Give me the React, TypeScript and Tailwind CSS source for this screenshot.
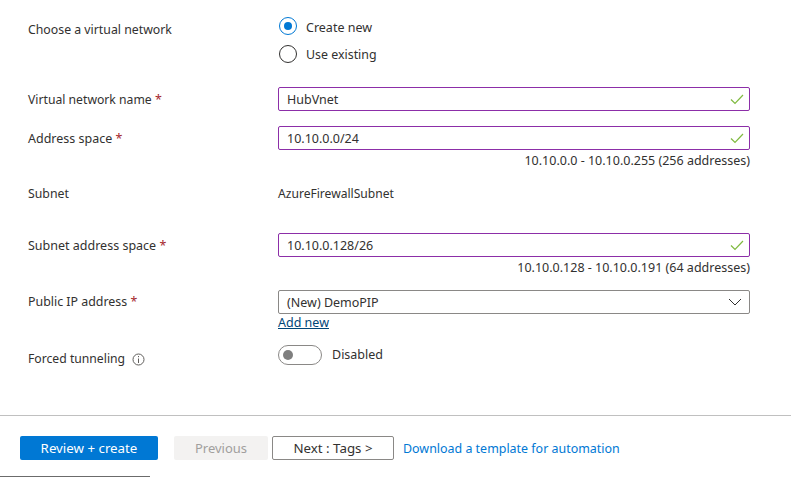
const font = "font-['Noto_Sans','Open_Sans',sans-serif]";

function Check() {
  return (
    <svg width="14" height="11" viewBox="0 0 14 11" fill="none" className="shrink-0">
      <path d="M1 5.5L5 9.5L13 1" stroke="#7FBA3F" strokeWidth="1.2" />
    </svg>
  );
}

function Label({ text, required, size }: { text: string; required?: boolean; size?: string }) {
  return (
    <div className={`text-[#323130] translate-y-px ${size ?? ""}`}>
      {text}
      {required && <span className="text-[#a4262c] text-[12.5px]"> *</span>}
    </div>
  );
}

function ValidInput({ value }: { value: string }) {
  return (
    <div className="h-6 w-full rounded-[2px] border border-[#8c2ea8] flex items-center justify-between pl-2 pr-[5px] text-[#323130]">
      <span className="translate-y-px">{value}</span>
      <Check />
    </div>
  );
}

function Row({ label, required, value, className, size }: { label: string; required?: boolean; value: string; className: string; size?: string }) {
  return (
    <div className={`grid grid-cols-[250px_472px] items-center ${className}`}>
      <Label text={label} required={required} size={size} />
      <ValidInput value={value} />
    </div>
  );
}

export default function App() {
  return (
    <div className={`${font} relative w-[791px] h-[477px] overflow-hidden bg-white text-[12.5px] leading-[18px] text-[#323130]`}>
      <div className="h-[415px] pl-[28px] pt-[17px]">
        <div className="grid grid-cols-[250px_472px] h-[46px] mb-[24px]">
          <div className="pt-[4px] text-[12.3px]">Choose a virtual network</div>
          <div className="flex flex-col gap-[10px]">
            <div className="flex items-center gap-[9px] h-[18px] pl-px">
              <span className="size-[18px] rounded-full border border-[#0078d4] flex items-center justify-center">
                <span className="size-[8px] rounded-full bg-[#0078d4]" />
              </span>
              <span className="translate-y-[2px]">Create new</span>
            </div>
            <div className="flex items-center gap-[9px] h-[18px] pl-px">
              <span className="size-[18px] rounded-full border border-[#323130]" />
              <span className="translate-y-px text-[12.4px]">Use existing</span>
            </div>
          </div>
        </div>

        <Row label="Virtual network name" required value="HubVnet" className="mb-[15px]" size="text-[12.2px]" />
        <Row label="Address space" required value="10.10.0.0/24" className="" />
        <div className="grid grid-cols-[250px_472px] mt-[2px]">
          <div />
          <div className="text-right">10.10.0.0 - 10.10.0.255 (256 addresses)</div>
        </div>

        <div className="grid grid-cols-[250px_472px] mt-[15px] mb-[30px]">
          <div className="text-[12.3px]">Subnet</div>
          <div className="text-[12.1px]">AzureFirewallSubnet</div>
        </div>

        <Row label="Subnet address space" required value="10.10.0.128/26" className="" />
        <div className="grid grid-cols-[250px_472px] mt-[2px]">
          <div />
          <div className="text-right">10.10.0.128 - 10.10.0.191 (64 addresses)</div>
        </div>

        <div className="grid grid-cols-[250px_472px] mt-[13px]">
          <div className="h-6 flex items-center whitespace-pre text-[12.4px]">
            <span>Public IP address</span>
            <span className="text-[#a4262c]"> *</span>
          </div>
          <div>
            <div className="h-6 rounded-[2px] border border-[#8a8886] flex items-center justify-between pl-2 pr-[7px]">
              <span className="translate-y-px">(New) DemoPIP</span>
              <svg width="14" height="8" viewBox="0 0 14 8" fill="none">
                <path d="M1 1L7 7L13 1" stroke="#323130" strokeWidth="1" />
              </svg>
            </div>
            <a className="block h-[18px] text-[#004578] underline">Add new</a>
          </div>
        </div>

        <div className="grid grid-cols-[250px_472px] mt-[14px]">
          <div className="flex items-center gap-[8px] h-5 translate-y-[3px] text-[12.2px]">
            <span>Forced tunneling</span>
            <svg width="13" height="13" viewBox="0 0 13 13" fill="none" className="-translate-x-[1px]">
              <circle cx="6.5" cy="6.5" r="5.5" stroke="#605e5c" strokeWidth="1" />
              <path d="M6.5 5.5V10M6.5 3V4.2" stroke="#605e5c" strokeWidth="1" />
            </svg>
          </div>
          <div className="flex items-start gap-[10px]">
            <span className="w-[44px] h-5 rounded-full border border-[#8a8886] flex items-center pl-[4px] -translate-y-px">
              <span className="size-[10px] rounded-full bg-[#7f7f7f]" />
            </span>
            <span>Disabled</span>
          </div>
        </div>
      </div>

      <div className="border-t border-[#c0c0c0] pt-[20px] pl-[20px] flex items-center h-6 box-content">
        <button className="w-[138px] h-6 rounded-[2px] bg-[#0078d4] text-white text-center text-[13.3px]">Review + create</button>
        <button className="ml-[16px] w-[94px] h-6 rounded-[2px] bg-[#f3f2f1] text-[#a19f9d] text-center text-[13px]">Previous</button>
        <button className="ml-[4px] w-[122px] h-6 rounded-[2px] border border-[#8a8886] text-[#323130] text-center text-[13.3px]">Next : Tags &gt;</button>
        <a className="ml-[9px] text-[#0078d4] text-[12.45px] translate-y-px">Download a template for automation</a>
      </div>

      <div className="absolute left-0 bottom-0 w-[150px] h-px bg-[#6b6b6b]" />
    </div>
  );
}
